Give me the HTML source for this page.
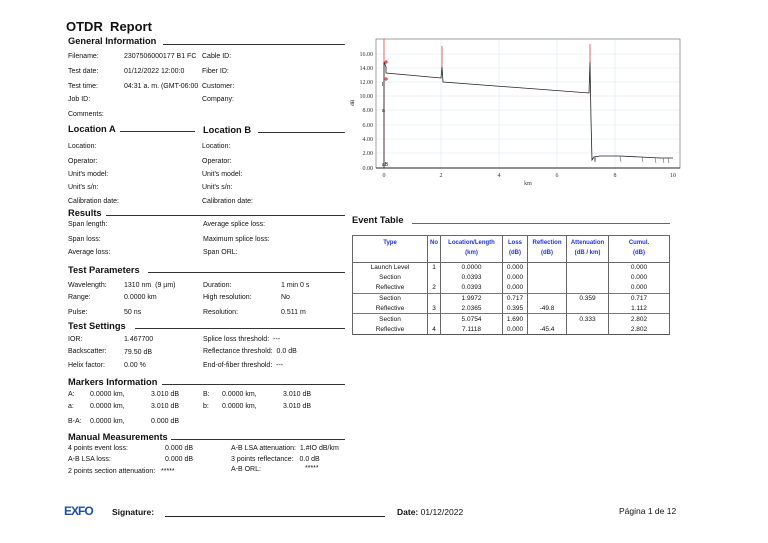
<!DOCTYPE html>
<html><head><meta charset="utf-8"><style>
*{margin:0;padding:0;box-sizing:border-box}
body{width:768px;height:543px;background:#fff;position:relative;overflow:hidden;font-family:"Liberation Sans",Arial,sans-serif;color:#111}
.t{position:absolute;font-size:7px;white-space:nowrap;line-height:8px}
.h{position:absolute;font-size:9.3px;font-weight:bold;white-space:nowrap;line-height:11px}
.l{position:absolute;height:1px;background:#333}
table{border-collapse:collapse;position:absolute;left:352px;top:235px;width:318px;font-size:6.5px}
td{text-align:center;border-left:1px solid #666;border-right:1px solid #666;height:10.3px;line-height:9px;padding:0}
th{color:#2233dd;font-weight:bold;font-size:6px;height:27px;line-height:10px;border:1px solid #666;vertical-align:top;padding-top:2px}
tr.s td{border-top:1px solid #777}
</style></head><body>
<div class="h" style="left:66px;top:20px;font-size:13px;line-height:14px">OTDR&nbsp; Report</div>
<div class="h" style="left:68px;top:36px">General Information</div><div class="l" style="left:163px;top:44px;width:182px"></div>
<div class="t" style="left:68px;top:53px">Filename:</div><div class="t" style="left:124px;top:53px">2307506000177 B1 FC</div><div class="t" style="left:202px;top:53px">Cable ID:</div>
<div class="t" style="left:68px;top:68px">Test date:</div><div class="t" style="left:124px;top:68px">01/12/2022 12:00:0</div><div class="t" style="left:202px;top:68px">Fiber ID:</div>
<div class="t" style="left:68px;top:83px">Test time:</div><div class="t" style="left:124px;top:83px">04:31 a. m. (GMT-06:00</div><div class="t" style="left:202px;top:83px;background:#fff">Customer:</div>
<div class="t" style="left:68px;top:96px">Job ID:</div><div class="t" style="left:202px;top:96px">Company:</div>
<div class="t" style="left:68px;top:111px">Comments:</div>
<div class="h" style="left:68px;top:124px">Location A</div><div class="l" style="left:120px;top:131px;width:75px"></div>
<div class="h" style="left:203px;top:125px">Location B</div><div class="l" style="left:258px;top:132px;width:87px"></div>
<div class="t" style="left:68px;top:143px">Location:</div><div class="t" style="left:202px;top:143px">Location:</div>
<div class="t" style="left:68px;top:158px">Operator:</div><div class="t" style="left:202px;top:158px">Operator:</div>
<div class="t" style="left:68px;top:171px">Unit's model:</div><div class="t" style="left:202px;top:171px">Unit's model:</div>
<div class="t" style="left:68px;top:184px">Unit's s/n:</div><div class="t" style="left:202px;top:184px">Unit's s/n:</div>
<div class="t" style="left:68px;top:198px">Calibration date:</div><div class="t" style="left:202px;top:198px">Calibration date:</div>
<div class="h" style="left:68px;top:208px">Results</div><div class="l" style="left:106px;top:215px;width:239px"></div>
<div class="t" style="left:68px;top:221px">Span length:</div><div class="t" style="left:203px;top:221px">Average splice loss:</div>
<div class="t" style="left:68px;top:236px">Span loss:</div><div class="t" style="left:203px;top:236px">Maximum splice loss:</div>
<div class="t" style="left:68px;top:249px">Average loss:</div><div class="t" style="left:203px;top:249px">Span ORL:</div>
<div class="h" style="left:68px;top:265px">Test Parameters</div><div class="l" style="left:148px;top:272px;width:197px"></div>
<div class="t" style="left:68px;top:282px">Wavelength:</div><div class="t" style="left:124px;top:282px">1310 nm&nbsp; (9 µm)</div><div class="t" style="left:203px;top:282px">Duration:</div><div class="t" style="left:281px;top:282px">1 min 0 s</div>
<div class="t" style="left:68px;top:294px">Range:</div><div class="t" style="left:124px;top:294px">0.0000 km</div><div class="t" style="left:203px;top:294px">High resolution:</div><div class="t" style="left:281px;top:294px">No</div>
<div class="t" style="left:68px;top:309px">Pulse:</div><div class="t" style="left:124px;top:309px">50 ns</div><div class="t" style="left:203px;top:309px">Resolution:</div><div class="t" style="left:281px;top:309px">0.511 m</div>
<div class="h" style="left:68px;top:321px">Test Settings</div><div class="l" style="left:135px;top:328px;width:210px"></div>
<div class="t" style="left:68px;top:336px">IOR:</div><div class="t" style="left:124px;top:336px">1.467700</div><div class="t" style="left:203px;top:336px">Splice loss threshold:&nbsp; ---</div>
<div class="t" style="left:68px;top:348px">Backscatter:</div><div class="t" style="left:124px;top:349px">79.50 dB</div><div class="t" style="left:203px;top:348px">Reflectance threshold:&nbsp; 0.0 dB</div>
<div class="t" style="left:68px;top:362px">Helix factor:</div><div class="t" style="left:124px;top:362px">0.00 %</div><div class="t" style="left:203px;top:362px">End-of-fiber threshold:&nbsp; ---</div>
<div class="h" style="left:68px;top:377px">Markers Information</div><div class="l" style="left:162px;top:384px;width:183px"></div>
<div class="t" style="left:68px;top:391px">A:</div><div class="t" style="left:90px;top:391px">0.0000 km,</div><div class="t" style="left:151px;top:391px">3.010 dB</div><div class="t" style="left:203px;top:391px">B:</div><div class="t" style="left:222px;top:391px">0.0000 km,</div><div class="t" style="left:283px;top:391px">3.010 dB</div>
<div class="t" style="left:68px;top:403px">a:</div><div class="t" style="left:90px;top:403px">0.0000 km,</div><div class="t" style="left:151px;top:403px">3.010 dB</div><div class="t" style="left:203px;top:403px">b:</div><div class="t" style="left:222px;top:403px">0.0000 km,</div><div class="t" style="left:283px;top:403px">3.010 dB</div>
<div class="t" style="left:68px;top:418px">B-A:</div><div class="t" style="left:90px;top:418px">0.0000 km,</div><div class="t" style="left:151px;top:418px">0.000 dB</div>
<div class="h" style="left:68px;top:432px">Manual Measurements</div><div class="l" style="left:171px;top:439px;width:174px"></div>
<div class="t" style="left:68px;top:445px">4 points event loss:</div><div class="t" style="left:165px;top:445px">0.000 dB</div><div class="t" style="left:231px;top:445px">A-B LSA attenuation:&nbsp; 1.#IO dB/km</div>
<div class="t" style="left:68px;top:456px">A-B LSA loss:</div><div class="t" style="left:165px;top:456px">0.000 dB</div><div class="t" style="left:231px;top:456px">3 points reflectance:&nbsp;&nbsp; 0.0 dB</div>
<div class="t" style="left:68px;top:468px">2 points section attenuation:&nbsp;&nbsp; *****</div><div class="t" style="left:231px;top:466px">A-B ORL:</div><div class="t" style="left:305px;top:465px">*****</div>

<svg style="position:absolute;left:345px;top:35px" width="340" height="160" viewBox="345 35 340 160">
<g stroke="#d8e8f4" stroke-width="0.6">
<line x1="441" y1="39" x2="441" y2="168"/><line x1="499" y1="39" x2="499" y2="168"/><line x1="557" y1="39" x2="557" y2="168"/><line x1="615" y1="39" x2="615" y2="168"/>
<line x1="376" y1="54" x2="680" y2="54"/><line x1="376" y1="68" x2="680" y2="68"/><line x1="376" y1="82" x2="680" y2="82"/><line x1="376" y1="96" x2="680" y2="96"/><line x1="376" y1="110" x2="680" y2="110"/><line x1="376" y1="125" x2="680" y2="125"/><line x1="376" y1="139" x2="680" y2="139"/><line x1="376" y1="153" x2="680" y2="153"/>
</g>
<rect x="376" y="39" width="304" height="129" fill="none" stroke="#888" stroke-width="0.8"/>
<line x1="376" y1="168" x2="680" y2="168" stroke="#222" stroke-width="1"/>
<g font-family="Liberation Serif,serif" font-size="6" fill="#333" text-anchor="end">
<text x="373" y="56">16.00</text><text x="373" y="70">14.00</text><text x="373" y="84">12.00</text><text x="373" y="98">10.00</text><text x="373" y="112">8.00</text><text x="373" y="127">6.00</text><text x="373" y="141">4.00</text><text x="373" y="155">2.00</text><text x="373" y="170">0.00</text>
</g>
<g font-family="Liberation Serif,serif" font-size="6" fill="#333" text-anchor="middle">
<text x="384" y="177">0</text><text x="441" y="177">2</text><text x="499" y="177">4</text><text x="557" y="177">6</text><text x="615" y="177">8</text><text x="673" y="177">10</text><text x="528" y="185">km</text>
</g>
<text x="354" y="106" font-size="5.5" font-family="Liberation Serif,serif" transform="rotate(-90 354 106)">dB</text>
<line x1="384" y1="39" x2="384" y2="168" stroke="#e04040" stroke-width="0.8"/>
<line x1="442" y1="46" x2="442" y2="68" stroke="#e04040" stroke-width="0.8"/>
<line x1="590" y1="44" x2="590" y2="62" stroke="#e04040" stroke-width="0.8"/>
<path d="M384 168 L384 62 L386 67 L386 73 L441 78 L442 67 L443 82 L589 93 L590 62 L591 120 L592 160 L594 157 L600 156 L620 156 L640 157 L660 158 L673 158" fill="none" stroke="#222" stroke-width="0.8"/>
<path d="M594 157 l1 5 l1 -5 M620 156 l1 6 M642 157 l1 5 M655 158 l1 5 M663 158 l1 5 M668 158 l1 5" stroke="#444" stroke-width="0.5" fill="none"/>
<g stroke="#e02020" stroke-width="1"><line x1="384" y1="62" x2="388" y2="62"/><line x1="386" y1="60" x2="386" y2="64"/><line x1="384" y1="79" x2="388" y2="79"/><line x1="386" y1="77" x2="386" y2="81"/></g>
<text x="382" y="86" font-size="5">I</text><text x="382" y="112" font-size="5">a</text><text x="382" y="166" font-size="5">aB</text>
</svg>

<div class="h" style="left:352px;top:215px">Event Table</div><div class="l" style="left:412px;top:223px;width:258px;background:#666"></div>
<table style="border:1px solid #555">
<tr><th style="width:75px">Type</th><th style="width:13px">No</th><th style="width:62px">Location/Length<br>(km)</th><th style="width:25px">Loss<br>(dB)</th><th style="width:39px">Reflection<br>(dB)</th><th style="width:42px">Attenuation<br>(dB / km)</th><th>Cumul.<br>(dB)</th></tr>
<tr style="border-top:1.5px solid #333"><td>Launch Level</td><td>1</td><td>0.0000</td><td>0.000</td><td></td><td></td><td>0.000</td></tr>
<tr><td>Section</td><td></td><td>0.0393</td><td>0.000</td><td></td><td></td><td>0.000</td></tr>
<tr><td>Reflective</td><td>2</td><td>0.0393</td><td>0.000</td><td></td><td></td><td>0.000</td></tr>
<tr class="s"><td>Section</td><td></td><td>1.9972</td><td>0.717</td><td></td><td>0.359</td><td>0.717</td></tr>
<tr><td>Reflective</td><td>3</td><td>2.0365</td><td>0.395</td><td>-49.8</td><td></td><td>1.112</td></tr>
<tr class="s"><td>Section</td><td></td><td>5.0754</td><td>1.690</td><td></td><td>0.333</td><td>2.802</td></tr>
<tr><td>Reflective</td><td>4</td><td>7.1118</td><td>0.000</td><td>-45.4</td><td></td><td>2.802</td></tr>
</table>

<div style="position:absolute;left:64px;top:504px;font-size:12px;font-weight:bold;color:#1e4fa8;letter-spacing:-1px;font-family:'Liberation Sans',sans-serif">EXFO</div>
<div class="t" style="left:112px;top:507px;font-size:8.5px;font-weight:bold;line-height:10px">Signature:</div>
<div class="l" style="left:165px;top:516px;width:220px;background:#222"></div>
<div class="t" style="left:397px;top:507px;font-size:8.5px;line-height:10px"><b>Date:</b> 01/12/2022</div>
<div class="t" style="left:619px;top:506px;font-size:8.5px;line-height:10px">Página 1 de 12</div>
</body></html>
